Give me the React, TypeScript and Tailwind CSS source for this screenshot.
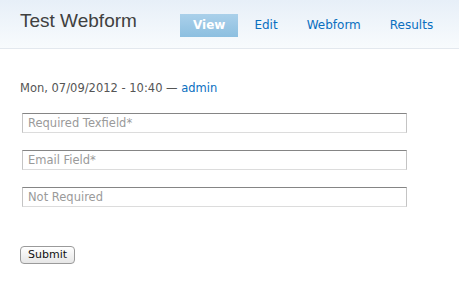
import React from "react";

const tabs = [
  { id: 0, text: "View", active: true },
  { id: 1, text: "Edit", active: false },
  { id: 2, text: "Webform", active: false },
  { id: 3, text: "Results", active: false },
];

const fields = [
  { id: 0, placeholder: "Required Texfield*" },
  { id: 1, placeholder: "Email Field*" },
  { id: 2, placeholder: "Not Required" },
];

const App = () => {
  return (
    <div className="w-[459px] h-[282px] bg-white overflow-hidden font-['DejaVu_Sans',Verdana,sans-serif]">
      <div className="h-[49px] flex items-start bg-gradient-to-b from-[#e7eff8] to-[#f8fbfd] border-b border-[#e3e8ee]">
        <h1 className="pl-[20px] pt-[9px] w-[180px] text-[19px] leading-[24px] text-[#404040] font-['Liberation_Sans',Arial,sans-serif]">
          Test Webform
        </h1>
        <nav className="flex gap-[3px] mt-[14px]">
          {tabs.map((tab) => (
            <a
              key={tab.id}
              href="#"
              className={
                tab.active
                  ? "block h-[23px] px-[13px] text-[12px] leading-[23px] font-bold text-white bg-gradient-to-b from-[#aad0ea] to-[#8cbfe0]"
                  : "block h-[23px] px-[13px] text-[12px] leading-[23px] text-[#0a6fbf]"
              }
            >
              {tab.text}
            </a>
          ))}
        </nav>
      </div>
      <div className="px-[20px]">
        <p className="mt-[32px] text-[11.5px] leading-[14px] text-[#555]">
          Mon, 07/09/2012 - 10:40 — <a href="#" className="text-[#0a6fbf]">admin</a>
        </p>
        <form className="mt-[18px] flex flex-col gap-[17px]">
          {fields.map((f) => (
            <input
              key={f.id}
              type="text"
              placeholder={f.placeholder}
              className="ml-[2px] w-[385px] h-[20px] pl-[5px] text-[11.5px] border border-[#c4c4c4] border-t-[#858585] border-b-[#dcdcdc] placeholder:text-[#9a9a9a] outline-none"
            />
          ))}
          <div className="mt-[17px]">
            <button
              type="button"
              className="h-[18px] px-[7px] text-[11px] leading-[16px] text-[#111] rounded-[4px] border border-[#9a9a9a] bg-gradient-to-b from-white to-[#e6e6e6]"
            >
              Submit
            </button>
          </div>
        </form>
      </div>
    </div>
  );
};

export default App;
